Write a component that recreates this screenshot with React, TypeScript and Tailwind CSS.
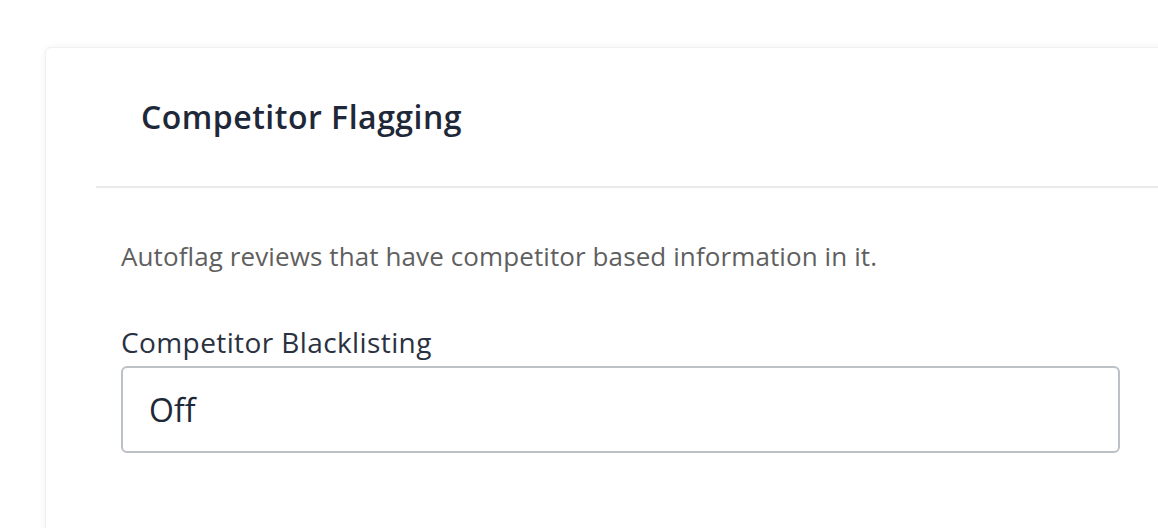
export default function App() {
  return (
    <div className="h-[528px] w-[1158px] overflow-hidden bg-white font-['Open_Sans',sans-serif] [font-variant-ligatures:none]">
      <div className="ml-[45px] mt-[47px] h-[600px] w-[1200px] rounded-[6px] border border-[#f0f1f3] bg-white shadow-[0_0_6px_rgba(0,0,0,0.06)]">
        <div className="ml-[50px]">
          <div className="flex h-[140px] items-center border-b-2 border-[#e8eaeb] pl-[45px]">
            <h2 className="text-[32px] font-semibold tracking-[0.5px] text-[#1f2838]">Competitor Flagging</h2>
          </div>
          <div className="pl-[25px] pr-[100px] pt-[50px]">
            <p className="text-[26px] leading-[36px] tracking-[0.1px] text-[#5f5f5f]">
              Autoflag reviews that have competitor based information in it.
            </p>
            <label className="mt-[50px] block text-[28px] leading-[36px] tracking-[0.4px] text-[#2a3140]">Competitor Blacklisting</label>
            <div className="mt-[6px] flex h-[87px] w-[999px] items-center rounded-[6px] border-2 border-[#bcc1c8] px-[26px] text-[32px] text-[#1f2838]">
              Off
            </div>
          </div>
        </div>
      </div>
    </div>
  );
}
